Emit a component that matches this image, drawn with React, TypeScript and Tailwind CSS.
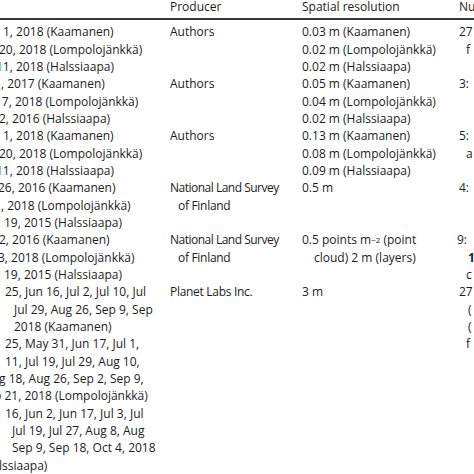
import React from 'react';

type Line = { t: React.ReactNode; c?: string };

type Row = {
  dates: Line[];
  producer: Line[];
  resolution: Line[];
  number: Line[];
};

const rows: Row[] = [
  {
    dates: [
      { t: '1, 2018 (Kaamanen)', c: 'ml-[3px]' },
      { t: '20, 2018 (Lompolojänkkä)', c: '-ml-[1px]' },
      { t: '11, 2018 (Halssiaapa)', c: '-ml-[4px]' },
    ],
    producer: [{ t: 'Authors' }],
    resolution: [
      { t: '0.03 m (Kaamanen)' },
      { t: '0.02 m (Lompolojänkkä)' },
      { t: '0.02 m (Halssiaapa)' },
    ],
    number: [{ t: '27' }, { t: 'f', c: 'ml-[7px]' }],
  },
  {
    dates: [
      { t: ', 2017 (Kaamanen)', c: 'ml-[1px]' },
      { t: '17, 2018 (Lompolojänkkä)', c: '-ml-[5px]' },
      { t: '2, 2016 (Halssiaapa)', c: '-ml-[1px]' },
    ],
    producer: [{ t: 'Authors' }],
    resolution: [
      { t: '0.05 m (Kaamanen)' },
      { t: '0.04 m (Lompolojänkkä)' },
      { t: '0.02 m (Halssiaapa)' },
    ],
    number: [{ t: '3:' }],
  },
  {
    dates: [
      { t: '1, 2018 (Kaamanen)', c: 'ml-[3px]' },
      { t: '20, 2018 (Lompolojänkkä)', c: '-ml-[1px]' },
      { t: '11, 2018 (Halssiaapa)', c: '-ml-[4px]' },
    ],
    producer: [{ t: 'Authors' }],
    resolution: [
      { t: '0.13 m (Kaamanen)' },
      { t: '0.08 m (Lompolojänkkä)' },
      { t: '0.09 m (Halssiaapa)' },
    ],
    number: [{ t: '5:' }, { t: 'a', c: 'ml-[7px]' }],
  },
  {
    dates: [
      { t: '26, 2016 (Kaamanen)', c: '-ml-[2px]' },
      { t: ', 2018 (Lompolojänkkä)', c: 'ml-[1px]' },
      { t: '19, 2015 (Halssiaapa)', c: 'ml-[4px]' },
    ],
    producer: [
      { t: 'National Land Survey', c: 'tracking-[-0.5px]' },
      { t: 'of Finland', c: 'ml-[8px] tracking-[-0.3px]' },
    ],
    resolution: [{ t: '0.5 m' }],
    number: [{ t: '4:' }],
  },
  {
    dates: [
      { t: '2, 2016 (Kaamanen)', c: '-ml-[1px]' },
      { t: '3, 2018 (Lompolojänkkä)', c: '-ml-[2px]' },
      { t: '19, 2015 (Halssiaapa)', c: 'ml-[4px]' },
    ],
    producer: [
      { t: 'National Land Survey', c: 'tracking-[-0.5px]' },
      { t: 'of Finland', c: 'ml-[8px] tracking-[-0.3px]' },
    ],
    resolution: [
      {
        t: (
          <>
            0.5 points m<sup className="text-[8px] relative -top-[1px]">−2</sup> (point
          </>
        ),
      },
      { t: 'cloud) 2 m (layers)', c: 'ml-[12px]' },
    ],
    number: [{ t: '9:', c: '-ml-[2px]' }, { t: '1', c: 'ml-[9px] font-bold' }, { t: 'c', c: 'ml-[7px]' }],
  },
  {
    dates: [
      { t: '25, Jun 16, Jul 2, Jul 10, Jul', c: 'ml-[5px]' },
      { t: 'Jul 29, Aug 26, Sep 9, Sep', c: 'ml-[14px]' },
      { t: '2018 (Kaamanen)', c: 'ml-[14px]' },
      { t: '25, May 31, Jun 17, Jul 1,', c: 'ml-[5px]' },
      { t: '11, Jul 19, Jul 29, Aug 10,', c: 'ml-[5px]' },
      { t: 'g 18, Aug 26, Sep 2, Sep 9,', c: '-ml-[1px]' },
      { t: 'p 21, 2018 (Lompolojänkkä)', c: '-ml-[6px]' },
      { t: '16, Jun 2, Jun 17, Jul 3, Jul', c: 'ml-[5px]' },
      { t: 'Jul 19, Jul 27, Aug 8, Aug', c: 'ml-[12px]' },
      { t: 'Sep 9, Sep 18, Oct 4, 2018', c: 'ml-[12px]' },
      { t: 'lssiaapa)', c: '-ml-[1px]' },
    ],
    producer: [{ t: 'Planet Labs Inc.', c: 'tracking-[-0.3px]' }],
    resolution: [{ t: '3 m' }],
    number: [{ t: '27' }, { t: '(', c: 'ml-[9px]' }, { t: '(', c: 'ml-[9px]' }, { t: 'f', c: 'ml-[7px]' }],
  },
];

function Cell({ lines, className }: { lines: Line[]; className: string }) {
  return (
    <div className={className}>
      {lines.map((l, i) => (
        <div key={i} className={`whitespace-nowrap ${l.c ?? ''}`}>
          {l.t}
        </div>
      ))}
    </div>
  );
}

export default function App() {
  return (
    <div className="w-[474px] h-[474px] overflow-hidden bg-white text-[#1c1c1c] font-['Open_Sans',sans-serif] text-[12px] leading-[17.33px]">
      <div className="-mt-[2px] grid grid-cols-[170px_132px_157px_60px] pb-[3px] border-b-[2px] border-[#3a3a3a]">
        <div />
        <div>Producer</div>
        <div>Spatial resolution</div>
        <div>Number</div>
      </div>
      <div className="pt-[3px]">
        {rows.map((r, i) => (
          <div key={i} className="grid grid-cols-[170px_132px_157px_60px]">
            <Cell lines={r.dates} className="overflow-hidden" />
            <Cell lines={r.producer} className="" />
            <Cell lines={r.resolution} className="" />
            <Cell lines={r.number} className="" />
          </div>
        ))}
      </div>
    </div>
  );
}
